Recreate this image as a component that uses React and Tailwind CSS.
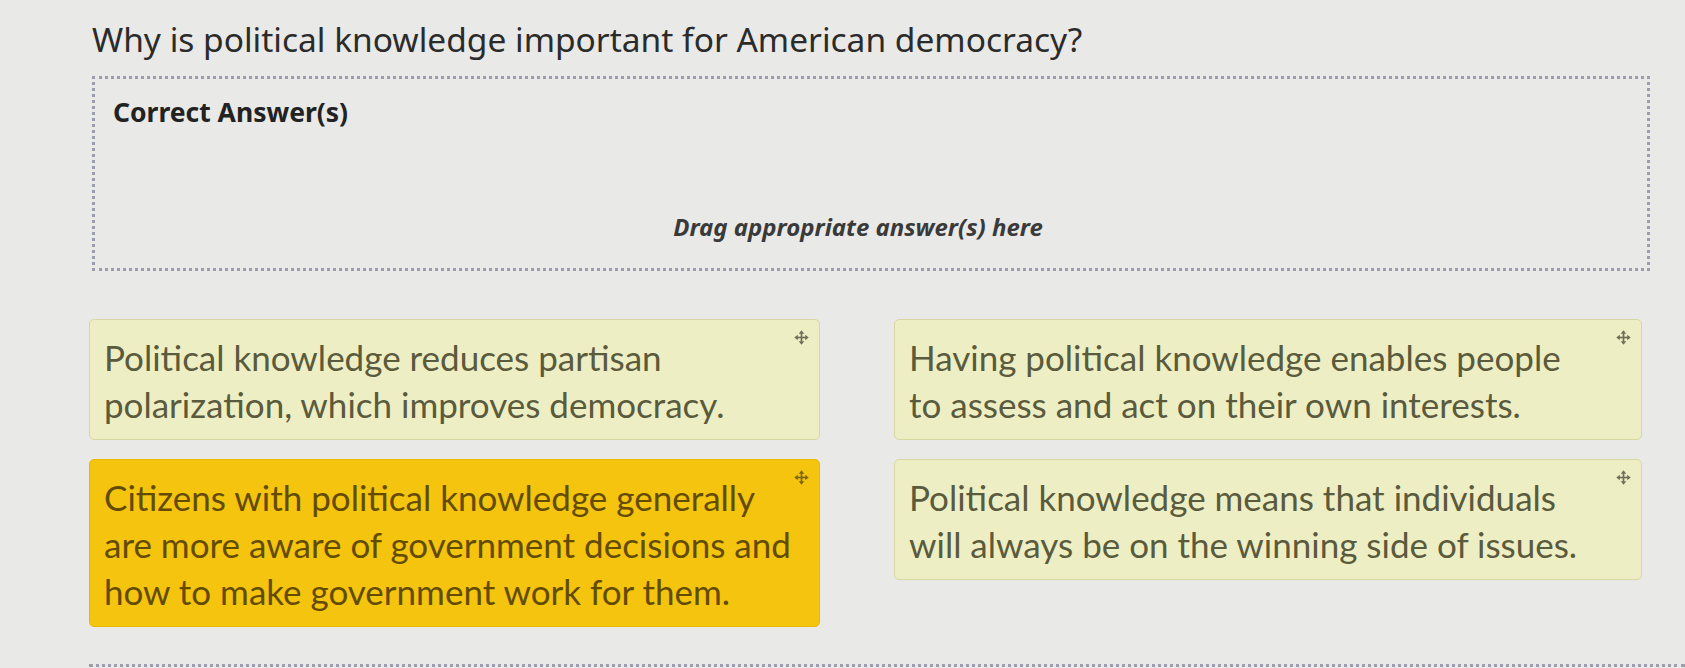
import React from 'react';

const CHOICES = [
  { id: 1, text: 'Political knowledge reduces partisan polarization, which improves democracy.', picked: false },
  { id: 2, text: 'Having political knowledge enables people to assess and act on their own interests.', picked: false },
  { id: 3, text: 'Citizens with political knowledge generally are more aware of government decisions and how to make government work for them.', picked: true },
  { id: 4, text: 'Political knowledge means that individuals will always be on the winning side of issues.', picked: false },
];

const MoveIcon = ({ className }) => (
  <svg viewBox="0 0 16 16" className={className} fill="currentColor">
    <rect x="7.1" y="3" width="1.8" height="10" />
    <rect x="3" y="7.1" width="10" height="1.8" />
    <path d="M8 0.3 L11 4 L5 4 Z" />
    <path d="M8 15.7 L11 12 L5 12 Z" />
    <path d="M0.3 8 L4 5 L4 11 Z" />
    <path d="M15.7 8 L12 5 L12 11 Z" />
  </svg>
);

const Choice = ({ text, picked }) => (
  <div
    className={`relative rounded-[5px] border pl-[14px] pt-[14px] pb-[11px] text-[35px] leading-[47px] ${
      picked
        ? 'pr-[12px] bg-[#f4c40e] border-[#e9b902] text-[#634c02]'
        : 'pr-[44px] bg-[#eeeec4] border-[#d8d8a2] text-[#5a5a3c]'
    }`}
  >
    <span className={`absolute right-[10px] top-[10px] ${picked ? 'text-[#80650a]' : 'text-[#6f6f5a]'}`}>
      <MoveIcon className="w-[15px] h-[15px]" />
    </span>
    {text}
  </div>
);

export default function App() {
  return (
    <div
      className="w-[1685px] h-[668px] overflow-hidden bg-[#e9e9e7] pl-[89px]"
      style={{ fontFamily: 'Lato, "Open Sans", sans-serif' }}
    >
      <h1 className="ml-[3px] pt-[17px] text-[33.5px] leading-[44px] text-[#2b2b2b] font-['Noto_Sans',sans-serif]">
        Why is political knowledge important for American democracy?
      </h1>

      <div className="mt-[15px] ml-[3px] w-[1558px] h-[195px] border-[3px] border-dotted border-[#9d9db0]">
        <div className="pl-[18px] pt-[17px] text-[26.5px] leading-[32px] font-bold text-[#222] font-['Noto_Sans',sans-serif]">
          Correct Answer(s)
        </div>
        <div className="mt-[84px] text-center pr-[26px] text-[24px] leading-[30px] italic font-bold text-[#3a3a3a] font-['Noto_Sans',sans-serif]">
          Drag appropriate answer(s) here
        </div>
      </div>

      <div className="mt-[48px] grid grid-cols-[731px_748px] gap-x-[74px] gap-y-[19px] items-start">
        {CHOICES.map((c) => (
          <Choice key={c.id} text={c.text} picked={c.picked} />
        ))}
      </div>

      <div className="mt-[37px] border-t-[3px] border-dotted border-[#9d9db0]" />
    </div>
  );
}
